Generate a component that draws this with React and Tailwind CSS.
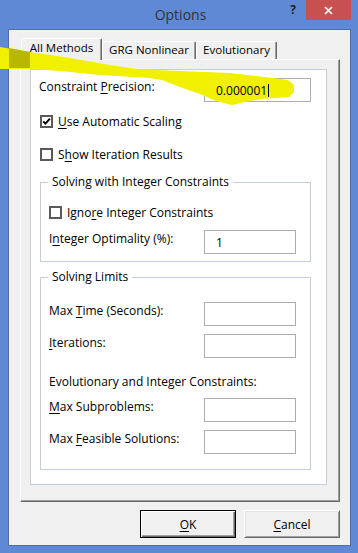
import React from "react";

function U({ children }) {
  return <span className="underline underline-offset-[2px] decoration-[1px]">{children}</span>;
}

function TextBox({ className, children }) {
  return (
    <div className={"h-[24px] shrink-0 bg-white border border-[#abadb3] flex items-center pl-[11px] " + className}>
      {children}
    </div>
  );
}

function CheckBox({ checked }) {
  return (
    <div className="w-[13px] h-[13px] shrink-0 border-2 border-[#5a5a5a] bg-white flex items-center justify-center">
      {checked && (
        <svg width="9" height="9" viewBox="0 0 9 9">
          <path d="M1.2 4.3 L3.5 6.7 L7.9 1.7" fill="none" stroke="#000" strokeWidth="1.9" />
        </svg>
      )}
    </div>
  );
}

function FieldRow({ label, labelW, boxW, className, children }) {
  return (
    <div className={"flex items-start pl-[8px] " + className}>
      <div className={"shrink-0 pt-[1px] leading-[15px] " + labelW}>{label}</div>
      <TextBox className={boxW}>{children}</TextBox>
    </div>
  );
}

function CheckRow({ checked, className, children }) {
  return (
    <div className={"h-[15px] flex items-center gap-[5px] " + className}>
      <CheckBox checked={checked} />
      <span className="leading-[15px]">{children}</span>
    </div>
  );
}

export default function App() {
  return (
    <div className="relative w-[358px] h-[553px] overflow-hidden bg-[#5f89d4] pl-[8px] pr-[7px] pb-[7px] flex flex-col font-['Open_Sans',sans-serif] text-[12px] leading-[15px] text-black">
      {/* Title bar */}
      <div className="h-[29px] shrink-0 grid grid-cols-[1fr_auto_1fr]">
        <div />
        <div className="pt-[5px] pl-[2px] text-[14px] leading-[19px] text-[#333]">Options</div>
        <div className="flex justify-end items-start">
          <span className="mt-[2px] mr-[10px] text-[12px] leading-[16px] font-bold text-[#222]">?</span>
          <div className="w-[45px] h-[20px] bg-[#c75050] flex items-center justify-center">
            <svg width="9" height="9" viewBox="0 0 9 9">
              <path d="M1 1 L8 8 M8 1 L1 8" stroke="#fff" strokeWidth="1.7" />
            </svg>
          </div>
        </div>
      </div>

      {/* Client area */}
      <div className="flex-1 border border-[#4d6fae] bg-[#f0f0f0] flex flex-col">
        {/* Tabs */}
        <div className="relative z-[1] mt-[8px] ml-[12px] h-[21px] flex items-end text-[11.5px]">
          <div className="h-[22px] -mb-px w-[81px] bg-[#f0f0f0] border-l border-t border-r border-l-white border-t-white border-r-[#696969] rounded-t-[2px] shadow-[inset_-1px_0_0_#a0a0a0] text-center pt-[1px]">
            All Methods
          </div>
          <div className="h-[18px] w-[94px] bg-[#f0f0f0] border-l border-t border-r border-l-white border-t-white border-r-[#696969] rounded-t-[2px] shadow-[inset_-1px_0_0_#a0a0a0] text-center">
            GRG Nonlinear
          </div>
          <div className="h-[18px] w-[81px] bg-[#f0f0f0] border-l border-t border-r border-l-white border-t-white border-r-[#696969] rounded-t-[2px] shadow-[inset_-1px_0_0_#a0a0a0] text-center">
            Evolutionary
          </div>
        </div>

        {/* Tab page */}
        <div className="ml-[11px] mr-[10px] h-[443px] shrink-0 border border-l-white border-t-white border-r-[#696969] border-b-[#696969] shadow-[inset_-1px_-1px_0_#a0a0a0] pt-[9px] pl-[9px] pr-[12px]">
          <div className="h-[416px] bg-white border border-[#c3cfdb] flex flex-col">
            <FieldRow className="mt-[8px]" labelW="w-[165px]" boxW="w-[107px]" label={<>Constraint <U>P</U>recision:</>}>
              <span className="relative z-20 flex items-center">
                0.000001
                <span className="ml-[1px] w-px h-[13px] bg-black" />
              </span>
            </FieldRow>

            <CheckRow checked className="mt-[12px] ml-[9px]">
              <U>U</U>se Automatic Scaling
            </CheckRow>
            <CheckRow className="mt-[18px] ml-[9px]">
              S<U>h</U>ow Iteration Results
            </CheckRow>

            <fieldset className="mt-[13px] ml-[9px] mr-[15px] border border-[#c3cfdb] pb-[7px]">
              <legend className="ml-[7px] px-[4px] leading-[14px]">Solving with Integer Constraints</legend>
              <CheckRow className="mt-[16px] ml-[8px]">
                Igno<U>r</U>e Integer Constraints
              </CheckRow>
              <FieldRow className="mt-[10px]" labelW="w-[155px]" boxW="w-[92px]" label={<>I<U>n</U>teger Optimality (%):</>}>
                1
              </FieldRow>
            </fieldset>

            <fieldset className="mt-[8px] ml-[9px] mr-[15px] border border-[#c3cfdb] pb-[15px]">
              <legend className="ml-[7px] px-[4px] leading-[14px]">Solving Limits</legend>
              <FieldRow className="mt-[18px]" labelW="w-[155px]" boxW="w-[92px]" label={<>Max <U>T</U>ime (Seconds):</>} />
              <FieldRow className="mt-[8px]" labelW="w-[155px]" boxW="w-[92px]" label={<><U>I</U>terations:</>} />
              <div className="mt-[16px] pl-[8px] leading-[15px]">Evolutionary and Integer Constraints:</div>
              <FieldRow className="mt-[9px]" labelW="w-[155px]" boxW="w-[92px]" label={<><U>M</U>ax Subproblems:</>} />
              <FieldRow className="mt-[8px]" labelW="w-[155px]" boxW="w-[92px]" label={<>Max <U>F</U>easible Solutions:</>} />
            </fieldset>
          </div>
        </div>

        {/* Buttons */}
        <div className="mt-[8px] mr-[10px] flex justify-end gap-[8px]">
          <div className="w-[96px] h-[28px] border border-black bg-[#f0f0f0] shadow-[inset_1px_1px_0_#fff,inset_-1px_-1px_0_#696969,inset_-2px_-2px_0_#a0a0a0] flex items-center justify-center">
            <span><U>O</U>K</span>
          </div>
          <div className="w-[96px] h-[28px] border border-l-white border-t-white border-r-[#696969] border-b-[#696969] bg-[#f0f0f0] shadow-[inset_1px_1px_0_#e3e3e3,inset_-1px_-1px_0_#a0a0a0] flex items-center justify-center">
            <span><U>C</U>ancel</span>
          </div>
        </div>
      </div>

      {/* Highlighter stroke */}
      <svg className="absolute left-0 top-0 z-10 pointer-events-none" width="358" height="553" viewBox="0 0 358 553">
        <polygon
          fill="#f0f000"
          points="0,47 30,52 70,58 110,65 137,69 180,71 230,73 265,77 288,80 294,85 294,92 289,97 262,99 245,102 232,105 216,101 200,94 180,87 162,80 150,78 100,75 60,71 30,69 0,69"
        />
        <polygon fill="#b9b800" points="9,48 30,52 30,68 9,68" />
      </svg>
    </div>
  );
}
